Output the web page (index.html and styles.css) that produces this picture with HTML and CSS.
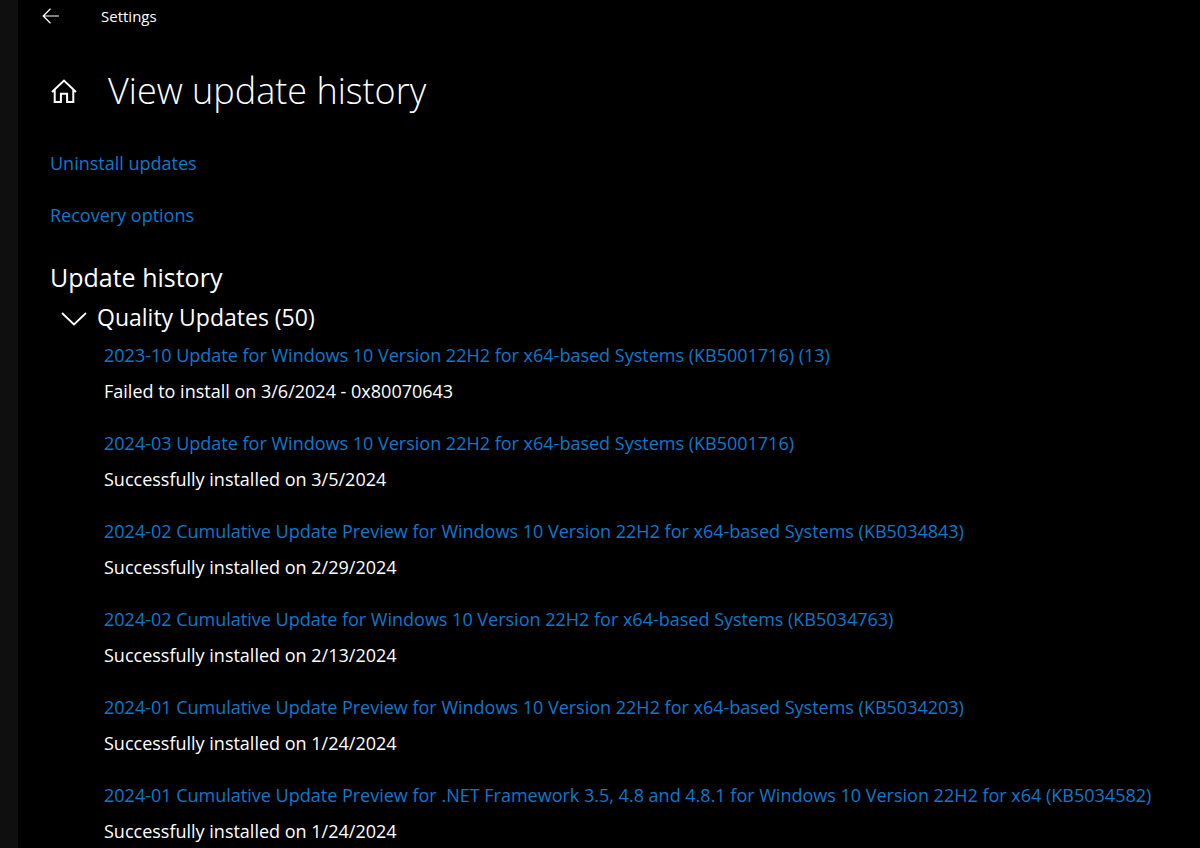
FILE: index.html
```html
<!DOCTYPE html>
<html lang="en">
<head>
  <meta charset="UTF-8">
  <meta name="viewport" content="width=device-width, initial-scale=1.0">
  <title>Settings</title>
  <link rel="stylesheet" href="styles.css">
</head>
<body>
  <header class="titlebar">
    <button class="back" type="button" aria-label="Back">
      <svg width="18" height="16" viewBox="0 0 18 16" fill="none" stroke="currentColor" stroke-width="1.2">
        <path d="M17 8H1M8.5 .8L1.2 8l7.3 7.2"/>
      </svg>
    </button>
    <span class="app-name">Settings</span>
  </header>

  <main>
    <div class="page-head">
      <a class="home" href="#" aria-label="Home">
        <svg width="26" height="26" viewBox="0 0 26 26" fill="none" stroke="currentColor" stroke-width="2">
          <path d="M2 14L14 2.6 26 14M4.7 11.8v12.3h6.2v-8.4h6.2v8.4h6.2V11.8"/>
        </svg>
      </a>
      <h1>View update history</h1>
    </div>

    <nav class="links">
      <a href="#">Uninstall updates</a>
      <a href="#">Recovery options</a>
    </nav>

    <section class="history">
      <h2>Update history</h2>
      <button class="group-toggle" type="button" aria-expanded="true">
        <svg width="26" height="14" viewBox="0 0 26 14" fill="none" stroke="currentColor" stroke-width="1.8">
          <path d="M1 1l12 11.5L25 1"/>
        </svg>
        <span>Quality Updates (50)</span>
      </button>

      <ul class="updates">
        <li>
          <a href="#">2023-10 Update for Windows 10 Version 22H2 for x64-based Systems (KB5001716) (13)</a>
          <p>Failed to install on 3/6/2024 - 0x80070643</p>
        </li>
        <li>
          <a href="#">2024-03 Update for Windows 10 Version 22H2 for x64-based Systems (KB5001716)</a>
          <p>Successfully installed on 3/5/2024</p>
        </li>
        <li>
          <a href="#">2024-02 Cumulative Update Preview for Windows 10 Version 22H2 for x64-based Systems (KB5034843)</a>
          <p>Successfully installed on 2/29/2024</p>
        </li>
        <li>
          <a href="#">2024-02 Cumulative Update for Windows 10 Version 22H2 for x64-based Systems (KB5034763)</a>
          <p>Successfully installed on 2/13/2024</p>
        </li>
        <li>
          <a href="#">2024-01 Cumulative Update Preview for Windows 10 Version 22H2 for x64-based Systems (KB5034203)</a>
          <p>Successfully installed on 1/24/2024</p>
        </li>
        <li>
          <a href="#">2024-01 Cumulative Update Preview for .NET Framework 3.5, 4.8 and 4.8.1 for Windows 10 Version 22H2 for x64 (KB5034582)</a>
          <p>Successfully installed on 1/24/2024</p>
        </li>
      </ul>
    </section>
  </main>
</body>
</html>
```
FILE: styles.css
```css
* {
  box-sizing: border-box;
}

body {
  margin: 0;
  min-height: 100vh;
  padding-left: 32px;
  border-left: 18px solid #0f0f0f;
  background: #000;
  color: #fff;
  font-family: 'Open Sans', 'Noto Sans', sans-serif;
  font-size: 18px;
  line-height: 28px;
}

h1, h2, p, ul {
  margin: 0;
  padding: 0;
  font-weight: 400;
}

a {
  color: #0f78cc;
  text-decoration: none;
}

a:hover {
  color: #8a8a8a;
}

button {
  padding: 0;
  border: none;
  background: none;
  color: inherit;
  font: inherit;
  cursor: pointer;
}

svg {
  display: block;
  overflow: visible;
}

.titlebar {
  display: flex;
  align-items: center;
  gap: 41px;
  height: 32px;
  margin-left: -8px;
}

.app-name {
  font-size: 15px;
}

.page-head {
  display: flex;
  align-items: center;
  gap: 32px;
  padding: 31px 0 30px;
}

.home {
  color: #fff;
}

h1 {
  font-size: 36px;
  font-weight: 300;
  line-height: 56px;
}

.links {
  display: flex;
  flex-direction: column;
  align-items: flex-start;
  gap: 24px;
}

.history {
  padding-top: 28px;
}

h2 {
  font-size: 25px;
  line-height: 40px;
}

.group-toggle {
  display: flex;
  align-items: baseline;
  gap: 10px;
  margin-left: 11px;
  font-size: 23px;
  line-height: 40px;
}

.updates {
  display: flex;
  flex-direction: column;
  gap: 24px;
  padding: 4px 0 0 54px;
  list-style: none;
}

.updates li {
  display: flex;
  flex-direction: column;
  align-items: flex-start;
  gap: 8px;
}
```
